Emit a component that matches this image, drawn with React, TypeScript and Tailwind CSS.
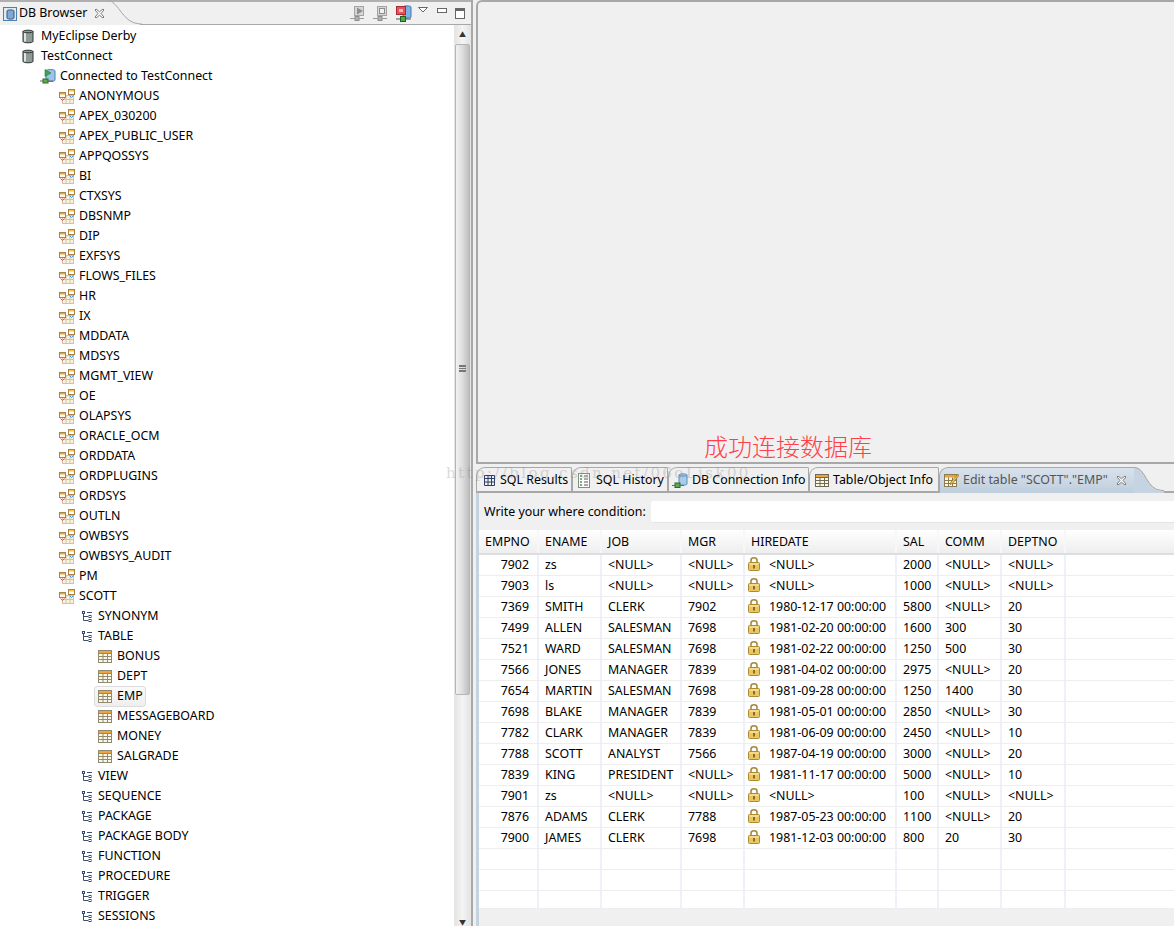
const SCHEMAS = ['ANONYMOUS','APEX_030200','APEX_PUBLIC_USER','APPQOSSYS','BI','CTXSYS','DBSNMP','DIP','EXFSYS','FLOWS_FILES','HR','IX','MDDATA','MDSYS','MGMT_VIEW','OE','OLAPSYS','ORACLE_OCM','ORDDATA','ORDPLUGINS','ORDSYS','OUTLN','OWBSYS','OWBSYS_AUDIT','PM','SCOTT'];
const TABLES = ['BONUS','DEPT','EMP','MESSAGEBOARD','MONEY','SALGRADE'];
const FOLDERS = ['VIEW','SEQUENCE','PACKAGE','PACKAGE BODY','FUNCTION','PROCEDURE','TRIGGER','SESSIONS'];

const N = '<NULL>';
const ROWS = [
  ['7902','zs',N,N,N,'2000',N,N],
  ['7903','ls',N,N,N,'1000',N,N],
  ['7369','SMITH','CLERK','7902','1980-12-17 00:00:00','5800',N,'20'],
  ['7499','ALLEN','SALESMAN','7698','1981-02-20 00:00:00','1600','300','30'],
  ['7521','WARD','SALESMAN','7698','1981-02-22 00:00:00','1250','500','30'],
  ['7566','JONES','MANAGER','7839','1981-04-02 00:00:00','2975',N,'20'],
  ['7654','MARTIN','SALESMAN','7698','1981-09-28 00:00:00','1250','1400','30'],
  ['7698','BLAKE','MANAGER','7839','1981-05-01 00:00:00','2850',N,'30'],
  ['7782','CLARK','MANAGER','7839','1981-06-09 00:00:00','2450',N,'10'],
  ['7788','SCOTT','ANALYST','7566','1987-04-19 00:00:00','3000',N,'20'],
  ['7839','KING','PRESIDENT',N,'1981-11-17 00:00:00','5000',N,'10'],
  ['7901','zs',N,N,N,'100',N,N],
  ['7876','ADAMS','CLERK','7788','1987-05-23 00:00:00','1100',N,'20'],
  ['7900','JAMES','CLERK','7698','1981-12-03 00:00:00','800','20','30'],
];
const HEADERS = ['EMPNO','ENAME','JOB','MGR','HIREDATE','SAL','COMM','DEPTNO'];
const CELL_W = ['w-[60px]','w-[63px]','w-[80px]','w-[63px]','w-[152px]','w-[42px]','w-[63px]','w-[64px]'];

function DbIcon() {
  return (
    <svg width="12" height="15" viewBox="0 0 12 15">
      <path d="M1 2.500C1 .8 11 .8 11 2.500V12.500C11 14.200 1 14.200 1 12.500Z" fill="#8f9a98" stroke="#2c3533" />
      <path d="M3 3.500V12.500" stroke="#dfe5e3" strokeWidth="2" />
      <path d="M1 2.500C1 4.200 11 4.200 11 2.500" fill="none" stroke="#2c3533" />
    </svg>
  );
}

function ConnectedIcon() {
  return (
    <svg width="16" height="16" viewBox="0 0 16 16">
      <path d="M6 3C6 1 15 1 15 3V12C15 14 6 14 6 12Z" fill="#9cc4e6" stroke="#4f7fae" />
      <path d="M5 1.500L11 5L5 8.500Z" fill="#3aa655" stroke="#1d7a3a" strokeWidth=".6" />
      <rect x="3" y="11" width="5" height="4" fill="#5dae4b" stroke="#2f6b2a" />
      <path d="M0 13H3M8 13H13" stroke="#666" />
    </svg>
  );
}

function SchemaIcon() {
  return (
    <svg width="17" height="15" viewBox="0 0 17 15">
      <rect x="3.500" y="6.500" width="11" height="8" fill="#f9f3e0" stroke="#d2c49a" />
      <path d="M7 6.500V14.500M11 6.500V14.500M3.500 10.500H14.500" stroke="#d2c49a" />
      <rect x=".5" y="3.500" width="6" height="5" fill="#fff" stroke="#a9824a" />
      <rect x="1" y="4" width="5" height="1.500" fill="#f5a623" />
      <path d="M1.500 9.500L3.500 11.500L5.500 9.500" fill="none" stroke="#d9534f" />
      <rect x="9.500" y=".5" width="6" height="5" fill="#fff" stroke="#a9824a" />
      <rect x="10" y="1" width="5" height="1.500" fill="#f5c242" />
      <path d="M10.500 6.500L12.500 8.500L14.500 6.500" fill="none" stroke="#4a90d9" />
    </svg>
  );
}

function TreeIcon() {
  return (
    <svg width="12" height="12" viewBox="0 0 12 12" fill="none">
      <path d="M2.500 3V10.500H7M2.500 6.500H7" stroke="#40506a" />
      <path d="M6 2.500H11" stroke="#40506a" />
      <rect x="1.500" y="1.500" width="2" height="2" fill="#fff" stroke="#2c4a86" />
      <rect x="8" y="5.500" width="2" height="2" fill="#fff" stroke="#2c4a86" />
      <rect x="8" y="9.500" width="2" height="2" fill="#fff" stroke="#2c4a86" />
    </svg>
  );
}

function TableIcon({ dark }: { dark?: boolean }) {
  const line = dark ? '#6f6a55' : '#8f8a70';
  return (
    <svg width="14" height="13" viewBox="0 0 14 13">
      <rect x=".5" y=".5" width="13" height="12" fill="#fbf8ea" stroke={line} />
      <rect x="1" y="1" width="12" height="2.500" fill="#f2a33a" />
      <path d="M.5 3.500H13.500M.5 6.500H13.500M.5 9.500H13.500M5 3.500V12.500M9.500 3.500V12.500" stroke={line} fill="none" />
    </svg>
  );
}

function GridIcon() {
  return (
    <svg width="11" height="11" viewBox="0 0 11 11" fill="none">
      <path d="M.5.500H10.500V10.500H.5ZM.5 3.500H10.500M.5 7H10.500M4 .500V10.500M7.500 .500V10.500" stroke="#2f3f6a" />
    </svg>
  );
}

function HistoryIcon() {
  return (
    <svg width="12" height="15" viewBox="0 0 12 15">
      <rect x=".5" y=".5" width="11" height="14" fill="#fff" stroke="#8a8a8a" />
      <path d="M2 3H4M2 6H4M2 9H4M2 12H4" stroke="#3f9a3f" strokeWidth="1.600" />
      <path d="M6 3H10M6 6H10M6 9H10M6 12H10" stroke="#555" />
    </svg>
  );
}

function DbTabIcon() {
  return (
    <svg width="16" height="15" viewBox="0 0 16 15">
      <path d="M7 2C7 .5 15 .5 15 2V11C15 12.500 7 12.500 7 11Z" fill="#a8cdec" stroke="#5d8bb8" />
      <path d="M7 2C7 3.500 15 3.500 15 2" fill="none" stroke="#5d8bb8" />
      <rect x="3" y="10" width="5" height="4.500" fill="#58ad4a" stroke="#2f6b2a" />
      <path d="M0 12.500H3M8 12.500H12" stroke="#666" />
    </svg>
  );
}

function EditTableIcon() {
  return (
    <svg width="15" height="15" viewBox="0 0 15 15">
      <rect x=".5" y="1.500" width="12" height="12" fill="#fbf8ea" stroke="#8b7a52" />
      <rect x="1" y="2" width="11" height="2.500" fill="#e8a33c" />
      <path d="M.5 7.500H12.500M.5 10.500H12.500M4.500 4.500V13.500M8.500 4.500V13.500" stroke="#8b7a52" fill="none" />
      <path d="M14 1L7 9L6 11.500L8.500 10.500L14.500 3Z" fill="#f2c14e" stroke="#8a6d1f" strokeWidth=".7" />
    </svg>
  );
}

function LockIcon() {
  return (
    <svg width="12" height="15" viewBox="0 0 12 15">
      <path d="M3 7V4.200C3 1 9 1 9 4.200V7" fill="none" stroke="#a88a3c" strokeWidth="1.600" />
      <rect x=".5" y="6.500" width="11" height="8" rx="1" fill="#e9c766" stroke="#b08a2e" />
      <path d="M1.500 8H10.500" stroke="#fbeeb8" />
      <rect x="5" y="9" width="2" height="3.500" fill="#8f6d1c" />
    </svg>
  );
}

function CloseX() {
  return (
    <svg width="11" height="11" viewBox="0 0 11 11" fill="#fff" stroke="#7c7c7c">
      <path d="M1 2L2 1L5.500 3.800L9 1L10 2L7 5.500L10 9L9 10L5.500 7.200L2 10L1 9L4 5.500Z" />
    </svg>
  );
}

function ToolbarIcon({ kind }: { kind: 'link' | 'tree' | 'stop' }) {
  if (kind === 'stop') {
    return (
      <svg width="16" height="17" viewBox="0 0 16 17">
        <path d="M7 2C7 .5 15 .5 15 2V12C15 13.500 7 13.500 7 12Z" fill="#7fb2e0" stroke="#3c7ab5" />
        <rect x=".5" y="1.500" width="9" height="8" fill="#e8505a" stroke="#a52a32" />
        <rect x="3" y="4" width="4" height="3" fill="#f5b5b5" />
        <rect x="4.500" y="11.500" width="5" height="5" fill="#4fa84a" stroke="#1f5f20" />
        <path d="M0 14H4M10 14H15" stroke="#555" />
      </svg>
    );
  }
  return (
    <svg width="15" height="17" viewBox="0 0 15 17" fill="none">
      <rect x="4.500" y="1.500" width="9" height="9" fill="#d6d6d6" stroke="#a3a3a3" />
      {kind === 'link' ? <path d="M7 2.500L13 6L7 9.500Z" fill="#8d8d8d" /> : <rect x="6.500" y="3.500" width="5" height="5" fill="#f0f0f0" stroke="#8d8d8d" />}
      <rect x="5" y="11.500" width="4" height="4" fill="#b0b0b0" stroke="#8d8d8d" />
      <path d="M0 13.500H5M9 13.500H14" stroke="#9a9a9a" />
    </svg>
  );
}

function TreeRow({ icon, label, selected }: { icon: React.ReactNode; label: string; selected?: boolean }) {
  return (
    <div className="flex h-[20px] items-center pl-[98px]">
      {selected ? (
        <div className="ml-[-4px] flex h-[21px] w-[52px] items-center gap-[5px] rounded-[3px] border border-[#dcdcdc] bg-gradient-to-b from-[#fafafa] to-[#eeeeee] pl-[3px]">
          {icon}
          <span>{label}</span>
        </div>
      ) : (
        <>
          <span className="flex w-[19px] shrink-0 items-center">{icon}</span>
          <span>{label}</span>
        </>
      )}
    </div>
  );
}

function Tree() {
  return (
    <div className="min-w-0 flex-1 overflow-hidden bg-white pt-[1px]">
      <div className="flex h-[20px] items-center gap-[7px] pl-[22px]"><DbIcon /><span>MyEclipse Derby</span></div>
      <div className="flex h-[20px] items-center gap-[7px] pl-[22px]"><DbIcon /><span>TestConnect</span></div>
      <div className="flex h-[20px] items-center gap-[4px] pl-[40px]"><ConnectedIcon /><span>Connected to TestConnect</span></div>
      {SCHEMAS.map((s) => (
        <div key={s} className="flex h-[20px] items-center gap-[3px] pl-[59px]"><SchemaIcon /><span>{s}</span></div>
      ))}
      <div className="flex h-[20px] items-center gap-[5px] pl-[81px]"><TreeIcon /><span>SYNONYM</span></div>
      <div className="flex h-[20px] items-center gap-[5px] pl-[81px]"><TreeIcon /><span>TABLE</span></div>
      {TABLES.map((t) => (
        <TreeRow key={t} icon={<TableIcon />} label={t} selected={t === 'EMP'} />
      ))}
      {FOLDERS.map((f) => (
        <div key={f} className="flex h-[20px] items-center gap-[5px] pl-[81px]"><TreeIcon /><span>{f}</span></div>
      ))}
    </div>
  );
}

function Scrollbar() {
  return (
    <div className="flex w-[17px] shrink-0 flex-col items-center border-x border-[#e6e6e6] bg-gradient-to-r from-[#e4e4e4] via-[#f4f4f4] to-[#e4e4e4]">
      <div className="flex h-[19px] w-full items-center justify-center text-[7px] text-[#333]">▲</div>
      <div className="flex h-[651px] w-[15px] items-center justify-center rounded-[2px] border border-[#b5b5b5] bg-gradient-to-r from-[#f2f2f2] via-[#dddddd] to-[#bdbdbd]">
        <div className="mb-[3px] h-[7px] w-[7px] border-y-2 border-[#777]"><div className="mt-[1px] h-[1px] bg-[#777]" /></div>
      </div>
      <div className="flex-1" />
      <div className="flex h-[8px] w-full items-center justify-center text-[7px] leading-none text-[#333]">▼</div>
    </div>
  );
}

function LeftPanel() {
  return (
    <div className="flex h-full w-[473px] shrink-0 flex-col border-r-2 border-[#a8a8a8]">
      <div className="relative flex h-[25px] shrink-0 items-center border-t-2 border-[#b0b0b0] pl-[3px]">
        <div className="absolute bottom-0 left-[140px] right-0 h-[1px] bg-[#a8a8a8]" />
        <svg className="absolute left-[108px] top-[-2px]" width="34" height="25" viewBox="0 0 34 25" fill="none">
          <path d="M0 0C12 3 14 23 32 24H34" stroke="#a8a8a8" />
        </svg>
        <svg width="14" height="16" viewBox="0 0 14 16" fill="none">
          <rect x=".5" y="1.500" width="13" height="13" fill="#dfeaf5" stroke="#4f7fae" />
          <path d="M4 5C4 3.500 11 3.500 11 5V12C11 13.500 4 13.500 4 12Z" fill="#7da9d4" stroke="#35597d" />
        </svg>
        <span className="ml-[2px]">DB Browser</span>
        <span className="ml-[7px] flex"><CloseX /></span>
        <div className="ml-auto flex items-center pr-[6px]">
          <ToolbarIcon kind="link" />
          <span className="w-[8px]" />
          <ToolbarIcon kind="tree" />
          <span className="w-[8px]" />
          <ToolbarIcon kind="stop" />
          <svg className="mb-[8px] ml-[6px]" width="10" height="6" viewBox="0 0 10 6" fill="none"><path d="M.5.500H9.500L5 5Z" stroke="#666" fill="#fff" /></svg>
          <span className="mb-[6px] ml-[9px] h-[5px] w-[10px] border border-[#666] bg-white" />
          <span className="ml-[8px] h-[11px] w-[10px] border border-[#666] border-t-[3px] bg-white" />
        </div>
      </div>
      <div className="flex min-h-0 flex-1">
        <Tree />
        <Scrollbar />
      </div>
    </div>
  );
}

function Tab({ icon, label, box }: { icon: React.ReactNode; label: string; box: string }) {
  return (
    <div className={`flex h-full items-center rounded-tl-[9px] rounded-tr-[2px] border-l border-r border-t border-[#a8a8a8] bg-[#f0f0f0] pt-[1px] ${box}`}>
      {icon}
      <span>{label}</span>
    </div>
  );
}

function DataTable() {
  return (
    <div className="min-h-0 flex-1 overflow-hidden">
      <div className="flex h-[25px] border-b-2 border-[#dcdee2] bg-gradient-to-b from-[#ffffff] to-[#eeeeee]">
        {HEADERS.map((h, i) => (
          <div key={h} className={`flex shrink-0 items-center border-r-2 border-[#f7f7f7] pl-[6px] pt-[2px] ${CELL_W[i]}`}>{h}</div>
        ))}
        <div className="flex-1" />
      </div>
      <div className="bg-white">
        {ROWS.map((r) => (
          <div key={r[0] + r[1]} className="flex h-[21px] border-b border-[#eeeeee]">
            {r.map((c, i) => (
              <div key={i} className={`flex shrink-0 items-center border-r-2 border-[#eef1f7] ${CELL_W[i]} ${i === 0 ? 'justify-end pr-[8px]' : i === 4 ? 'pl-[3px]' : 'pl-[6px]'}`}>
                {i === 4 && <span className="mb-[4px] mr-[9px] flex shrink-0"><LockIcon /></span>}
                {c}
              </div>
            ))}
          </div>
        ))}
        {[21, 21, 18].map((h, k) => (
          <div key={k} className={`flex border-b border-[#eeeeee] ${h === 21 ? 'h-[21px]' : 'h-[18px]'}`}>
            {CELL_W.map((w, i) => (
              <div key={i} className={`shrink-0 border-r-2 border-[#eef1f7] ${w}`} />
            ))}
          </div>
        ))}
      </div>
    </div>
  );
}

function BottomPanel() {
  return (
    <div className="relative flex min-h-0 flex-1 flex-col">
      <div className="relative flex h-[26px] shrink-0 border-b-2 border-[#a8a8a8]">
        <Tab box="w-[96px] gap-[5px] pl-[7px]" icon={<GridIcon />} label="SQL Results" />
        <Tab box="w-[96px] gap-[6px] pl-[5px]" icon={<HistoryIcon />} label="SQL History" />
        <Tab box="w-[141px] gap-[4px] pl-[3px]" icon={<DbTabIcon />} label="DB Connection Info" />
        <Tab box="w-[130px] gap-[4px] pl-[5px]" icon={<TableIcon dark />} label="Table/Object Info" />
        <div className="flex h-[26px] w-[195px] items-center gap-[4px] rounded-tl-[9px] border-l border-t border-[#a8a8a8] bg-gradient-to-b from-[#d9e2ec] to-[#bfcedd] pl-[4px] text-[#555]">
          <EditTableIcon />
          <span>Edit table "SCOTT"."EMP"</span>
          <span className="ml-[4px] flex"><CloseX /></span>
        </div>
        <svg className="absolute left-[658px] top-0" width="30" height="26" viewBox="0 0 30 26">
          <path d="M0 0H1C12 1 12 23 28 24H30V26H0Z" fill="#c6d3e1" />
          <path d="M0 .5H1C12 1 12 23 28 23.500H30" fill="none" stroke="#a8a8a8" />
        </svg>
      </div>
      <div className="flex min-h-0 flex-1 flex-col border-l-[3px] border-[#c5d2e0] bg-[#f0f0f0]">
        <div className="flex h-[37px] shrink-0 items-center pl-[5px]">
          <span className="mt-[2px]">Write your where condition:</span>
          <div className="ml-[5px] h-[22px] flex-1 rounded-l-[3px] border-b border-[#e4e4e4] bg-white" />
        </div>
        <DataTable />
      </div>
      <div className="absolute left-[-30px] top-[-1px] whitespace-nowrap font-['DejaVu_Serif',serif] text-[15px] tracking-[2.4px] text-[#8a8a8a] opacity-30">
        http://blog.csdn.net/06oLisk00
      </div>
    </div>
  );
}

export default function App() {
  return (
    <div className="flex h-[926px] w-[1174px] overflow-hidden bg-[#f0f0f0] font-['Noto_Sans','Noto_Sans_CJK_SC',sans-serif] text-[12.4px] leading-none text-black">
      <LeftPanel />
      <div className="ml-[3px] flex h-full min-w-0 flex-1 flex-col">
        <div className="relative h-[464px] shrink-0 rounded-tl-[6px] border-b-2 border-l-2 border-t-2 border-[#a8a8a8]">
          <div className="absolute left-[226px] top-[433px] whitespace-nowrap text-[24px] font-light leading-none text-[#ff4048]">
            成功连接数据库
          </div>
        </div>
        <div className="h-[3px] shrink-0" />
        <BottomPanel />
      </div>
    </div>
  );
}
